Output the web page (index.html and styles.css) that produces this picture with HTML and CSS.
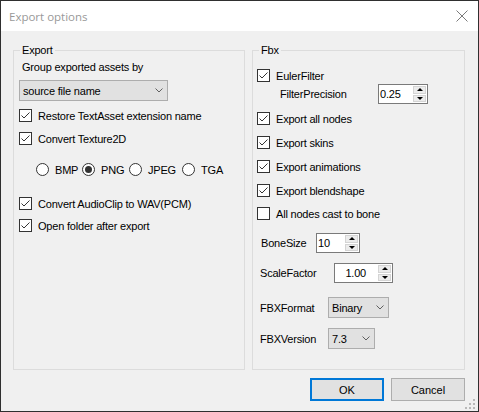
FILE: index.html
```html
<!DOCTYPE html>
<html lang="en">
<head>
<meta charset="utf-8">
<title>Export options</title>
<link rel="stylesheet" href="styles.css">
</head>
<body>
<div class="window">
  <div class="titlebar">
    <span class="title">Export options</span>
    <svg class="close" width="12" height="12" viewBox="0 0 12 12"><path d="M0.5 0.5L11.5 11.5M11.5 0.5L0.5 11.5" stroke="#7a7a7a" stroke-width="1" fill="none"/></svg>
  </div>

  <div class="client">
    <div class="groups">
      <!-- Export settings -->
      <div class="group group-export">
        <span class="group-title">Export</span>
        <div class="prompt">Group exported assets by</div>
        <div class="combo combo-group">
          <span class="combo-text">source file name</span>
          <svg class="chevron" width="8" height="5" viewBox="0 0 8 5"><path d="M0.5 0.5L4 4L7.5 0.5" stroke="#606060" fill="none"/></svg>
        </div>

        <label class="check mt-6">
          <svg class="box" width="13" height="13" viewBox="0 0 13 13"><rect x="0.5" y="0.5" width="12" height="12" fill="#fff" stroke="#333"/><path d="M2.5 6.5L5 9L10.5 3.5" fill="none" stroke="#333"/></svg>
          Restore TextAsset extension name
        </label>
        <label class="check mt-6">
          <svg class="box" width="13" height="13" viewBox="0 0 13 13"><rect x="0.5" y="0.5" width="12" height="12" fill="#fff" stroke="#333"/><path d="M2.5 6.5L5 9L10.5 3.5" fill="none" stroke="#333"/></svg>
          Convert Texture2D
        </label>

        <div class="radios">
          <label class="radio radio-bmp">
            <svg class="dot" width="13" height="13" viewBox="0 0 13 13"><circle cx="6.5" cy="6.5" r="6" fill="#fff" stroke="#333"/></svg>
            BMP
          </label>
          <label class="radio radio-png">
            <svg class="dot" width="13" height="13" viewBox="0 0 13 13"><circle cx="6.5" cy="6.5" r="6" fill="#fff" stroke="#333"/><circle cx="6.5" cy="6.5" r="3.5" fill="#333"/></svg>
            PNG
          </label>
          <label class="radio radio-jpeg">
            <svg class="dot" width="13" height="13" viewBox="0 0 13 13"><circle cx="6.5" cy="6.5" r="6" fill="#fff" stroke="#333"/></svg>
            JPEG
          </label>
          <label class="radio">
            <svg class="dot" width="13" height="13" viewBox="0 0 13 13"><circle cx="6.5" cy="6.5" r="6" fill="#fff" stroke="#333"/></svg>
            TGA
          </label>
        </div>

        <label class="check mt-17">
          <svg class="box" width="13" height="13" viewBox="0 0 13 13"><rect x="0.5" y="0.5" width="12" height="12" fill="#fff" stroke="#333"/><path d="M2.5 6.5L5 9L10.5 3.5" fill="none" stroke="#333"/></svg>
          Convert AudioClip to WAV(PCM)
        </label>
        <label class="check mt-5">
          <svg class="box" width="13" height="13" viewBox="0 0 13 13"><rect x="0.5" y="0.5" width="12" height="12" fill="#fff" stroke="#333"/><path d="M2.5 6.5L5 9L10.5 3.5" fill="none" stroke="#333"/></svg>
          Open folder after export
        </label>
      </div>

      <!-- FBX settings -->
      <div class="group group-fbx">
        <span class="group-title">Fbx</span>
        <label class="check">
          <svg class="box" width="13" height="13" viewBox="0 0 13 13"><rect x="0.5" y="0.5" width="12" height="12" fill="#fff" stroke="#333"/><path d="M2.5 6.5L5 9L10.5 3.5" fill="none" stroke="#333"/></svg>
          EulerFilter
        </label>
        <div class="field field-precision">
          <span class="field-label">FilterPrecision</span>
          <div class="spin spin-precision">
            <span class="spin-value">0.25</span>
            <span class="spin-btns"><span class="spin-half"><i class="tri tri-up"></i></span><span class="spin-half"><i class="tri tri-down"></i></span></span>
          </div>
        </div>
        <label class="check mt-6">
          <svg class="box" width="13" height="13" viewBox="0 0 13 13"><rect x="0.5" y="0.5" width="12" height="12" fill="#fff" stroke="#333"/><path d="M2.5 6.5L5 9L10.5 3.5" fill="none" stroke="#333"/></svg>
          Export all nodes
        </label>
        <label class="check mt-7">
          <svg class="box" width="13" height="13" viewBox="0 0 13 13"><rect x="0.5" y="0.5" width="12" height="12" fill="#fff" stroke="#333"/><path d="M2.5 6.5L5 9L10.5 3.5" fill="none" stroke="#333"/></svg>
          Export skins
        </label>
        <label class="check mt-7">
          <svg class="box" width="13" height="13" viewBox="0 0 13 13"><rect x="0.5" y="0.5" width="12" height="12" fill="#fff" stroke="#333"/><path d="M2.5 6.5L5 9L10.5 3.5" fill="none" stroke="#333"/></svg>
          Export animations
        </label>
        <label class="check mt-7">
          <svg class="box" width="13" height="13" viewBox="0 0 13 13"><rect x="0.5" y="0.5" width="12" height="12" fill="#fff" stroke="#333"/><path d="M2.5 6.5L5 9L10.5 3.5" fill="none" stroke="#333"/></svg>
          Export blendshape
        </label>
        <label class="check mt-6">
          <svg class="box" width="13" height="13" viewBox="0 0 13 13"><rect x="0.5" y="0.5" width="12" height="12" fill="#fff" stroke="#333"/></svg>
          All nodes cast to bone
        </label>

        <div class="field field-bone">
          <span class="field-label">BoneSize</span>
          <div class="spin spin-bone">
            <span class="spin-value">10</span>
            <span class="spin-btns"><span class="spin-half"><i class="tri tri-up"></i></span><span class="spin-half"><i class="tri tri-down"></i></span></span>
          </div>
        </div>
        <div class="field field-scale">
          <span class="field-label">ScaleFactor</span>
          <div class="spin spin-scale">
            <span class="spin-value spin-value-right">1.00</span>
            <span class="spin-btns"><span class="spin-half"><i class="tri tri-up"></i></span><span class="spin-half"><i class="tri tri-down"></i></span></span>
          </div>
        </div>
        <div class="field field-format">
          <span class="field-label">FBXFormat</span>
          <div class="combo combo-format">
            <span class="combo-text">Binary</span>
            <svg class="chevron" width="8" height="5" viewBox="0 0 8 5"><path d="M0.5 0.5L4 4L7.5 0.5" stroke="#606060" fill="none"/></svg>
          </div>
        </div>
        <div class="field field-version">
          <span class="field-label">FBXVersion</span>
          <div class="combo combo-version">
            <span class="combo-text">7.3</span>
            <svg class="chevron" width="8" height="5" viewBox="0 0 8 5"><path d="M0.5 0.5L4 4L7.5 0.5" stroke="#606060" fill="none"/></svg>
          </div>
        </div>
      </div>
    </div>

    <div class="buttons">
      <button class="btn btn-default" type="button">OK</button>
      <button class="btn" type="button">Cancel</button>
    </div>
  </div>

  <svg class="grip" width="11" height="11" viewBox="0 0 11 11">
    <rect x="8" y="0" width="2" height="2" fill="#b8b8b8"/>
    <rect x="4" y="4" width="2" height="2" fill="#b8b8b8"/>
    <rect x="8" y="4" width="2" height="2" fill="#b8b8b8"/>
    <rect x="0" y="8" width="2" height="2" fill="#b8b8b8"/>
    <rect x="4" y="8" width="2" height="2" fill="#b8b8b8"/>
    <rect x="8" y="8" width="2" height="2" fill="#b8b8b8"/>
  </svg>
</div>
</body>
</html>
```

FILE: styles.css
```css
html, body {
  margin: 0;
  padding: 0;
}

body {
  width: 479px;
  height: 412px;
  font-family: "Liberation Sans", Arial, sans-serif;
  font-size: 11px;
  letter-spacing: -0.2px;
  color: #000;
  background: #fff;
}

/* Dialog frame */
.window {
  position: relative;
  box-sizing: border-box;
  width: 479px;
  height: 412px;
  border: 1px solid #2f2f2f;
  background: #f0f0f0;
  display: flex;
  flex-direction: column;
}

.titlebar {
  flex: none;
  height: 30px;
  background: #fff;
  display: flex;
  align-items: center;
  justify-content: space-between;
  padding: 0 10px 0 8px;
}

.title {
  font-family: "Open Sans", sans-serif;
  font-size: 11.5px;
  letter-spacing: 0;
  color: #999;
}

.close {
  display: block;
}

.client {
  flex: 1;
  display: flex;
  flex-direction: column;
  padding: 19px 13px 0 12px;
}

/* Group boxes */
.groups {
  display: flex;
  gap: 7px;
  height: 320px;
}

.group {
  position: relative;
  box-sizing: border-box;
  border: 1px solid #dcdcdc;
  display: flex;
  flex-direction: column;
  align-items: flex-start;
}

.group-export {
  width: 232px;
  padding: 10px 0 0 5px;
}

.group-fbx {
  width: 213px;
  padding: 16px 0 0 4px;
}

.group-title {
  position: absolute;
  top: -7px;
  left: 6px;
  padding: 0 2px;
  line-height: 13px;
  background: #f0f0f0;
}

.prompt {
  margin-left: 3px;
  line-height: 13px;
}

/* Check boxes and radio buttons */
.check,
.radio {
  display: flex;
  align-items: center;
  height: 17px;
  white-space: nowrap;
}

.box,
.dot {
  display: block;
  flex: none;
  margin-right: 6px;
}

.mt-5 { margin-top: 5px; }
.mt-6 { margin-top: 6px; }
.mt-7 { margin-top: 7px; }
.mt-17 { margin-top: 17px; }

.radios {
  display: flex;
  margin: 14px 0 0 17px;
}

.radio-bmp { width: 46px; }
.radio-png { width: 47px; }
.radio-jpeg { width: 53px; }

/* Drop-down lists */
.combo {
  box-sizing: border-box;
  height: 21px;
  border: 1px solid #adadad;
  background: #e1e1e1;
  display: flex;
  align-items: center;
  justify-content: space-between;
  padding: 0 4px 0 3px;
}

.combo-group {
  width: 149px;
  margin-top: 6px;
}

.combo-format { width: 61px; }
.combo-version { width: 47px; }

.chevron {
  display: block;
  flex: none;
}

/* Label + control rows */
.field {
  display: flex;
  align-items: center;
  margin-left: 3px;
}

.field-label {
  flex: none;
}

.field-precision { margin-left: 23px; }
.field-precision .field-label { width: 98px; }

.field-bone { margin: 11px 0 0 4px; }
.field-bone .field-label { width: 55px; }

.field-scale { margin-top: 10px; }
.field-scale .field-label { width: 74px; }

.field-format { margin-top: 14px; }
.field-format .field-label { width: 68px; }

.field-version { margin-top: 10px; }
.field-version .field-label { width: 68px; }

/* Numeric up-down */
.spin {
  box-sizing: border-box;
  height: 20px;
  border: 1px solid #7a7a7a;
  background: #fff;
  display: flex;
}

.spin-precision { width: 50px; }
.spin-bone { width: 44px; }
.spin-scale { width: 59px; }

.spin-value {
  flex: 1;
  padding-left: 1px;
  line-height: 18px;
}

.spin-value-right {
  text-align: right;
  padding: 0 11px 0 0;
}

.spin-btns {
  flex: none;
  box-sizing: border-box;
  width: 15px;
  padding: 1px;
  display: flex;
  flex-direction: column;
  gap: 1px;
}

.spin-half {
  flex: 1;
  background: #ececec;
  border: 1px solid #d4d4d4;
  display: flex;
  align-items: center;
  justify-content: center;
}

.tri {
  display: block;
  width: 0;
  height: 0;
  border-left: 3px solid transparent;
  border-right: 3px solid transparent;
}

.tri-up { border-bottom: 3px solid #000; }
.tri-down { border-top: 3px solid #000; }

/* Dialog buttons */
.buttons {
  display: flex;
  justify-content: flex-end;
  gap: 7px;
  margin-top: 8px;
}

.btn {
  box-sizing: border-box;
  width: 74px;
  height: 23px;
  margin: 0;
  padding: 0;
  border: 1px solid #adadad;
  background: #e1e1e1;
  font: inherit;
  color: #000;
}

.btn-default {
  border: 2px solid #0078d7;
}

.grip {
  position: absolute;
  right: 2px;
  bottom: 1px;
}
```
